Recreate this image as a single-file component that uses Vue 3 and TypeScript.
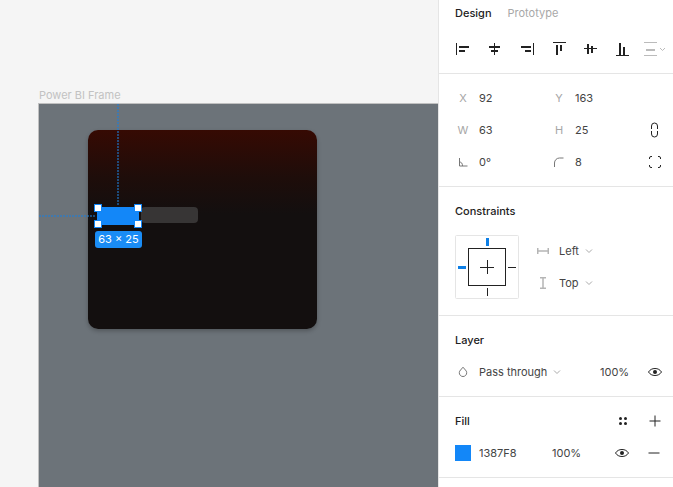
<script setup lang="ts">
const alignIcons = [
  'M2 2h1v12H2zM5 5h10v2H5zM5 9h6v2H5z',
  'M8 2h1v12H8zM3 5h11v2H3zM5 9h7v2H5z',
  'M15 2h1v12h-1zM3 5h10v2H3zM7 9h6v2H7z',
  'M3 1h13v1H3zM6 4h2v10H6zM10 4h2v6h-2z',
  'M2 7h13v1H2zM5 3h2v10H5zM9 5h2v7H9z',
  'M2 14h13v1H2zM5 2h2v12H5zM9 6h2v8H9z'
]

const fields = [
  { label: 'X', value: '92', label2: 'Y', value2: '163' },
  { label: 'W', value: '63', label2: 'H', value2: '25' }
]

const handles = ['tl', 'tr', 'bl', 'br']
</script>

<template>
  <div class="editor">
    <div class="canvas">
      <div class="frame-label">Power BI Frame</div>
      <div class="frame"></div>
      <div class="card"></div>
      <div class="bar"></div>
      <div class="guide-v"></div>
      <div class="guide-h"></div>
      <div class="selection">
        <span v-for="h in handles" :key="h" class="handle" :class="h"></span>
      </div>
      <div class="size-tag">63 × 25</div>
    </div>

    <aside class="panel">
      <section class="section head">
        <div class="tabs">
          <span class="tab active">Design</span>
          <span class="tab">Prototype</span>
        </div>
        <div class="align-row">
          <span v-for="d in alignIcons" :key="d" class="align-btn">
            <svg width="16" height="16" viewBox="0 0 16 16">
              <path :d="d" fill="#222" />
            </svg>
          </span>
          <span class="align-btn more">
            <svg width="24" height="16" viewBox="0 0 24 16">
              <path d="M0 1h13v1H0zM2 8h9v2H2zM0 14h13v1H0z" fill="#bbb" />
              <path d="M16 7l2.500 2.500L21 7" fill="none" stroke="#bbb" />
            </svg>
          </span>
        </div>
      </section>

      <section class="section pos">
        <div v-for="f in fields" :key="f.label" class="pos-row">
          <div class="field"><span class="lbl">{{ f.label }}</span><span class="val">{{ f.value }}</span></div>
          <div class="field"><span class="lbl">{{ f.label2 }}</span><span class="val">{{ f.value2 }}</span></div>
          <svg v-if="f.label === 'W'" class="side-icon" width="16" height="16" viewBox="0 0 16 16">
            <path d="M4.500 7V4a3 3 0 0 1 6 0v3M4.500 9v3a3 3 0 0 0 6 0V9" fill="none" stroke="#222" />
          </svg>
        </div>
        <div class="pos-row">
          <div class="field">
            <span class="lbl">
              <svg width="10" height="10" viewBox="0 0 10 10"><path d="M1.500 1v8h8M1.500 5c2 0 3 1.500 3 4" fill="none" stroke="#777" /></svg>
            </span>
            <span class="val">0°</span>
          </div>
          <div class="field">
            <span class="lbl">
              <svg width="10" height="10" viewBox="0 0 10 10"><path d="M.500 10V6a5 5 0 0 1 5-5h4" fill="none" stroke="#777" /></svg>
            </span>
            <span class="val">8</span>
          </div>
          <svg class="side-icon" width="16" height="16" viewBox="0 0 16 16">
            <path d="M2.500 5V4a1.500 1.500 0 0 1 1.500-1.500h1M11 2.500h1A1.500 1.500 0 0 1 13.500 4v1M13.500 11v1a1.500 1.500 0 0 1-1.500 1.500h-1M5 13.500H4A1.500 1.500 0 0 1 2.500 12v-1" fill="none" stroke="#222" />
          </svg>
        </div>
      </section>

      <section class="section constraints">
        <h3 class="title">Constraints</h3>
        <div class="constraint-body">
          <svg class="constraint-box" width="64" height="64" viewBox="0 0 64 64">
            <rect x=".5" y=".5" width="63" height="63" rx="1" fill="#fff" stroke="#e5e5e5" />
            <rect x="13.500" y="13.500" width="37" height="37" fill="none" stroke="#222" />
            <path d="M32.500 25v14M25 32.500h14M53 32.500h8M32.500 53v8" stroke="#222" fill="none" />
            <path d="M31 3h3v8h-3zM3 31h8v3H3z" fill="#0d7fe6" />
          </svg>
          <div class="constraint-opts">
            <div class="opt">
              <svg width="12" height="16" viewBox="0 0 12 16"><path d="M.750 5v6M11.250 5v6M1 8h10" fill="none" stroke="#b5b5b5" stroke-width="1.500" /></svg>
              <span class="opt-text">Left</span>
              <svg class="chev" width="8" height="6" viewBox="0 0 8 6"><path d="M1 1.500l3 3 3-3" fill="none" stroke="#aaa" /></svg>
            </div>
            <div class="opt">
              <svg width="12" height="16" viewBox="0 0 12 16"><path d="M3 2.750h6M3 13.250h6M6 3v10" fill="none" stroke="#b5b5b5" stroke-width="1.500" /></svg>
              <span class="opt-text">Top</span>
              <svg class="chev" width="8" height="6" viewBox="0 0 8 6"><path d="M1 1.500l3 3 3-3" fill="none" stroke="#aaa" /></svg>
            </div>
          </div>
        </div>
      </section>

      <section class="section layer">
        <h3 class="title">Layer</h3>
        <div class="layer-row">
          <svg class="drop" width="10" height="12" viewBox="0 0 10 12">
            <path d="M5 1.200L2.600 4A3.700 3.700 0 1 0 7.400 4z" fill="none" stroke="#777" />
          </svg>
          <div class="blend-group">
            <span class="blend">Pass through</span>
            <svg class="chev" width="8" height="6" viewBox="0 0 8 6"><path d="M1 1.500l3 3 3-3" fill="none" stroke="#aaa" /></svg>
          </div>
          <span class="layer-pct">100%</span>
          <svg width="16" height="16" viewBox="0 0 16 16">
            <path d="M1.500 8C3 5.600 5.300 4.500 8 4.500S13 5.600 14.500 8C13 10.400 10.700 11.500 8 11.500S3 10.400 1.500 8z" fill="none" stroke="#222" />
            <circle cx="8" cy="8" r="2" fill="#222" />
          </svg>
        </div>
      </section>

      <section class="section fill">
        <div class="fill-head">
          <h3 class="title">Fill</h3>
          <svg class="dots" width="16" height="16" viewBox="0 0 16 16">
            <circle cx="5.500" cy="5.500" r="1.500" fill="#222" /><circle cx="10.500" cy="5.500" r="1.500" fill="#222" />
            <circle cx="5.500" cy="10.500" r="1.500" fill="#222" /><circle cx="10.500" cy="10.500" r="1.500" fill="#222" />
          </svg>
          <svg width="16" height="16" viewBox="0 0 16 16"><path d="M2.500 8h11M8 2.500v11" stroke="#222" fill="none" /></svg>
        </div>
        <div class="fill-row">
          <span class="swatch"></span>
          <span class="hex">1387F8</span>
          <span class="fill-pct">100%</span>
          <svg class="dots" width="16" height="16" viewBox="0 0 16 16">
            <path d="M1.500 8C3 5.600 5.300 4.500 8 4.500S13 5.600 14.500 8C13 10.400 10.700 11.500 8 11.500S3 10.400 1.500 8z" fill="none" stroke="#222" />
            <circle cx="8" cy="8" r="2" fill="#222" />
          </svg>
          <svg width="16" height="16" viewBox="0 0 16 16"><path d="M2.500 8h11" stroke="#222" fill="none" /></svg>
        </div>
      </section>
    </aside>
  </div>
</template>

<style scoped>
.editor {
  display: flex;
  width: 673px;
  height: 487px;
  overflow: hidden;
  font-family: Inter, "Liberation Sans", sans-serif;
  font-size: 11px;
  color: #333;
}

.canvas {
  position: relative;
  width: 438px;
  flex-shrink: 0;
  background: #f5f5f5;
  overflow: hidden;
}

.frame-label {
  position: absolute;
  left: 39px;
  top: 88px;
  line-height: 14px;
  color: #c2c2c2;
}

.frame {
  position: absolute;
  left: 38px;
  top: 103px;
  width: 410px;
  height: 400px;
  background: #6c7379;
  border: 1px solid #c0c0c0;
}

.card {
  position: absolute;
  left: 88px;
  top: 130px;
  width: 229px;
  height: 199px;
  border-radius: 10px;
  background: linear-gradient(180deg, #360a03 0%, #1e0d0a 24%, #130f0f 42%, #130f0f 100%);
  box-shadow: 0 2px 4px rgba(0, 0, 0, 0.25);
}

.bar {
  position: absolute;
  left: 141px;
  top: 207px;
  width: 57px;
  height: 16px;
  border-radius: 4px;
  background: #373535;
}

.guide-v {
  position: absolute;
  left: 117px;
  top: 104px;
  width: 2px;
  height: 102px;
  background: repeating-linear-gradient(180deg, rgba(30, 125, 215, 0.55) 0 2px, transparent 2px 3px);
}

.guide-h {
  position: absolute;
  left: 39px;
  top: 215px;
  width: 56px;
  height: 2px;
  background: repeating-linear-gradient(90deg, rgba(30, 125, 215, 0.55) 0 2px, transparent 2px 3px);
}

.selection {
  position: absolute;
  left: 97px;
  top: 207px;
  width: 42px;
  height: 18px;
  background: #1387f8;
}

.handle {
  position: absolute;
  box-sizing: border-box;
  width: 8px;
  height: 8px;
  background: #fff;
  border: 1px solid #1387f8;
}

.handle.tl { left: -3px; top: -3px; }
.handle.tr { right: -3px; top: -3px; }
.handle.bl { left: -3px; bottom: -3px; }
.handle.br { right: -3px; bottom: -3px; }

.size-tag {
  position: absolute;
  left: 95px;
  top: 231px;
  width: 47px;
  height: 17px;
  border-radius: 3px;
  background: #1a8cf5;
  color: #fff;
  line-height: 17px;
  text-align: center;
}

.panel {
  width: 235px;
  min-width: 0;
  flex-shrink: 0;
  box-sizing: border-box;
  border-left: 1px solid #e5e5e5;
  background: #fff;
  display: flex;
  flex-direction: column;
}

.section {
  border-bottom: 1px solid #e5e5e5;
}

.head {
  height: 74px;
  box-sizing: border-box;
}

.tabs {
  display: flex;
  gap: 16px;
  padding: 6px 0 0 16px;
  line-height: 14px;
}

.tab {
  color: #a8a8a8;
}

.tab.active {
  color: #222;
  font-weight: 500;
}

.align-row {
  display: flex;
  padding: 13px 0 0 7px;
}

.align-btn {
  width: 32px;
  height: 32px;
  flex-shrink: 0;
  display: flex;
  align-items: center;
  justify-content: center;
}

.align-btn.more {
  justify-content: flex-start;
  padding-left: 6px;
  box-sizing: border-box;
}

.pos {
  height: 113px;
  box-sizing: border-box;
  padding: 8px 0 8px 12px;
}

.pos-row {
  display: flex;
  align-items: center;
  height: 32px;
}

.field {
  width: 96px;
  display: flex;
  align-items: center;
}

.lbl {
  width: 24px;
  margin-right: 4px;
  text-align: center;
  color: #a6a6a6;
  display: flex;
  justify-content: center;
}

.val {
  color: #444;
}

.side-icon {
  margin-left: 4px;
}

.constraints {
  height: 129px;
  box-sizing: border-box;
  padding: 17px 0 0 16px;
}

.title {
  margin: 0;
  font-size: 11px;
  font-weight: 500;
  line-height: 14px;
  color: #222;
}

.constraint-body {
  display: flex;
  margin-top: 17px;
}

.constraint-opts {
  margin-left: 18px;
}

.opt {
  display: flex;
  align-items: center;
  height: 32px;
}

.opt-text {
  margin-left: 10px;
  color: #444;
}

.chev {
  margin-left: 6px;
}

.layer {
  height: 81px;
  box-sizing: border-box;
  padding: 17px 0 0 16px;
}

.layer-row {
  display: flex;
  align-items: center;
  height: 32px;
  margin-top: 9px;
}

.drop {
  margin-left: 3px;
  flex-shrink: 0;
}

.blend-group {
  width: 121px;
  margin-left: 11px;
  display: flex;
  align-items: center;
}

.blend,
.layer-pct {
  color: #444;
}

.layer-pct {
  width: 47px;
}

.fill {
  height: 81px;
  box-sizing: border-box;
  padding: 16px 10px 0 16px;
}

.fill-head {
  display: flex;
  align-items: center;
}

.fill-head .title {
  flex: 1;
}

.dots {
  margin-right: 16px;
}

.fill-row {
  display: flex;
  align-items: center;
  height: 32px;
  margin-top: 8px;
}

.swatch {
  width: 16px;
  height: 16px;
  background: #1387f8;
}

.hex {
  width: 73px;
  margin-left: 8px;
  color: #444;
}

.fill-pct {
  width: 62px;
  color: #444;
}
</style>

<style>
html, body {
  margin: 0;
  background: #fff;
}
</style>
